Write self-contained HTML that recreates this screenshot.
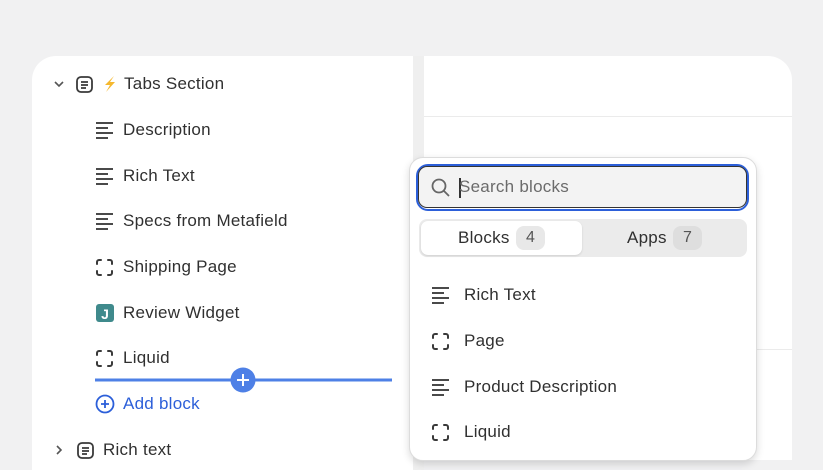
<!DOCTYPE html><html><head><style>
html,body{margin:0;width:823px;height:470px;overflow:hidden}
body{background:#f1f1f2;font-family:"Liberation Sans",sans-serif;position:relative;color:#303030}
.a{position:absolute}
.t{position:absolute;font-size:17px;line-height:20px;white-space:nowrap;letter-spacing:.25px}
</style></head><body>
<div class="a" style="left:32px;top:56px;width:760px;height:414px;background:#fff;border-radius:24px 24px 0 0"></div>
<div class="a" style="left:413px;top:56px;width:11px;height:414px;background:#efefef"></div>
<div class="a" style="left:424px;top:116px;width:368px;height:1px;background:#ebebeb"></div>
<div class="a" style="left:424px;top:349px;width:368px;height:1px;background:#ebebeb"></div>
<div class="a" style="left:424px;top:460px;width:368px;height:10px;background:#f1f1f2"></div>

<svg class="a" style="left:0;top:0" width="823" height="470">
<defs>
<g id="ln" fill="none" stroke="#4a4a4a" stroke-width="2"><path d="M0 1h17M0 6h12M0 11h17M0 16h12"/></g>
<g id="br" fill="none" stroke="#3a3a3a" stroke-width="2" stroke-linecap="round"><path d="M1 5V3a2 2 0 0 1 2-2h2M12 1h2a2 2 0 0 1 2 2v2M16 12v2a2 2 0 0 1-2 2h-2M5 16H3a2 2 0 0 1-2-2v-2"/></g>
<g id="sec" fill="none" stroke="#3a3a3a" stroke-width="1.8"><rect x="1" y="1" width="15" height="15" rx="4"/><path d="M5 6h7M5 9h7M5 12h5"/></g>
</defs>
<path d="M55 82l4 4 4-4" fill="none" stroke="#555" stroke-width="1.6"/>
<use href="#sec" x="76" y="76"/>
<path d="M114 76l-9 9h5l-4 7 9-10h-5z" fill="#f5b82e"/>
<use href="#ln" x="96" y="122"/>
<use href="#ln" x="96" y="168"/>
<use href="#ln" x="96" y="213"/>
<use href="#br" x="96" y="259"/>
<rect x="96" y="304" width="18" height="18" rx="3" fill="#3f8a8c"/>
<text x="105" y="319" font-size="14" font-weight="bold" fill="#fff" text-anchor="middle" font-family="Liberation Sans">J</text>
<use href="#br" x="96" y="350"/>
<path d="M95 380H392" stroke="#4e80e6" stroke-width="3"/>
<circle cx="243" cy="380" r="12.5" fill="#4e80e6"/>
<path d="M243 374v12M237 380h12" stroke="#fff" stroke-width="2"/>
<circle cx="105" cy="404" r="8.5" fill="none" stroke="#2c5fd9" stroke-width="1.8"/>
<path d="M105 400v8M101 404h8" stroke="#2c5fd9" stroke-width="1.8"/>
<path d="M57 446l4 4-4 4" fill="none" stroke="#555" stroke-width="1.6"/>
<use href="#sec" x="77" y="442"/>
</svg>
<div class="t" style="left:124px;top:74px">Tabs Section</div>
<div class="t" style="left:123px;top:120px">Description</div>
<div class="t" style="left:123px;top:166px">Rich Text</div>
<div class="t" style="left:123px;top:211px">Specs from Metafield</div>
<div class="t" style="left:123px;top:257px">Shipping Page</div>
<div class="t" style="left:123px;top:303px">Review Widget</div>
<div class="t" style="left:123px;top:348px">Liquid</div>
<div class="t" style="left:123px;top:394px;color:#2c5fd9">Add block</div>
<div class="t" style="left:103px;top:440px">Rich text</div>

<div class="a" style="left:409px;top:157px;width:346px;height:302px;background:#fff;border:1px solid #dcdcdc;border-radius:14px;box-shadow:0 3px 8px rgba(0,0,0,.15)"></div>
<div class="a" style="left:416px;top:164px;width:329px;height:43px;border:2px solid #2c5fd9;border-radius:12px"></div>
<div class="a" style="left:418px;top:166px;width:329px;height:42px;border:1.5px solid #333;border-radius:9px;background:#f3f3f3;box-sizing:border-box"></div>
<svg class="a" style="left:430px;top:177px" width="22" height="22"><circle cx="9" cy="9" r="6.5" fill="none" stroke="#666" stroke-width="1.8"/><path d="M14 14l5 5" stroke="#666" stroke-width="1.8"/></svg>
<div class="a" style="left:459px;top:178px;width:1.5px;height:20px;background:#333"></div>
<div class="t" style="left:459px;top:177px;color:#6b6b6b">Search blocks</div>
<div class="a" style="left:419px;top:219px;width:328px;height:38px;background:#ebebeb;border-radius:8px"></div>
<div class="a" style="left:421px;top:221px;width:161px;height:34px;background:#fff;border-radius:7px;box-shadow:0 1px 2px rgba(0,0,0,.12)"></div>
<div class="t" style="left:458px;top:228px">Blocks</div>
<div class="a" style="left:516px;top:226px;width:29px;height:24px;background:#e8e8e8;border-radius:8px;font-size:16px;line-height:24px;text-align:center;color:#555">4</div>
<div class="t" style="left:627px;top:228px">Apps</div>
<div class="a" style="left:673px;top:226px;width:29px;height:24px;background:#dedede;border-radius:8px;font-size:16px;line-height:24px;text-align:center;color:#555">7</div>
<svg class="a" style="left:0;top:0" width="823" height="470">
<use href="#ln" x="432" y="287"/>
<use href="#br" x="432" y="333"/>
<use href="#ln" x="432" y="379"/>
<use href="#br" x="432" y="424"/>
</svg>
<div class="t" style="left:464px;top:285px">Rich Text</div>
<div class="t" style="left:464px;top:331px">Page</div>
<div class="t" style="left:464px;top:377px">Product Description</div>
<div class="t" style="left:464px;top:422px">Liquid</div>
</body></html>
